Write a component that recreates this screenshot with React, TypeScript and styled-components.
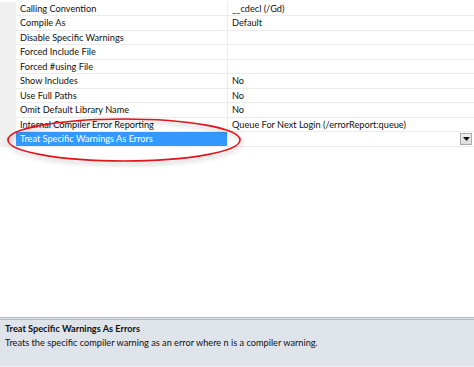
import React from "react";
import styled, { createGlobalStyle } from "styled-components";

const GlobalStyle = createGlobalStyle`
  html, body {
    margin: 0;
    padding: 0;
    background: #ffffff;
  }
  body {
    font-family: Lato, "Open Sans", sans-serif;
    font-size: 9.2px;
    color: #111111;
  }
`;

const rows = [
  { name: "Calling Convention", value: "__cdecl (/Gd)" },
  { name: "Compile As", value: "Default" },
  { name: "Disable Specific Warnings", value: "" },
  { name: "Forced Include File", value: "" },
  { name: "Forced #using File", value: "" },
  { name: "Show Includes", value: "No" },
  { name: "Use Full Paths", value: "No" },
  { name: "Omit Default Library Name", value: "No" },
  { name: "Internal Compiler Error Reporting", value: "Queue For Next Login (/errorReport:queue)" },
  { name: "Treat Specific Warnings As Errors", value: "", selected: true },
];

export default function App() {
  return (
    <>
      <GlobalStyle />
      <Window>
        <GridArea>
          <PropertyTable>
            <Gutter />
            <Grid>
              {rows.map((row) => (
                <Row key={row.name}>
                  <NameCell $selected={!!row.selected}>{row.name}</NameCell>
                  <ValueCell>
                    <span>{row.value}</span>
                    {row.selected && (
                      <DropButton>
                        <svg width="7" height="4" viewBox="0 0 7 4">
                          <path d="M0 0h7L3.5 4Z" fill="#111" />
                        </svg>
                      </DropButton>
                    )}
                  </ValueCell>
                </Row>
              ))}
            </Grid>
          </PropertyTable>
          <Highlight viewBox="0 0 250 50" width="250" height="50">
            <defs>
              <filter id="sh" x="-10%" y="-30%" width="120%" height="170%">
                <feDropShadow dx="1" dy="3" stdDeviation="2" floodColor="#000" floodOpacity="0.25" />
              </filter>
            </defs>
            <ellipse
              cx="124"
              cy="22"
              rx="116"
              ry="21"
              fill="none"
              stroke="#e0141b"
              strokeWidth="1.6"
              filter="url(#sh)"
            />
          </Highlight>
        </GridArea>
        <Description>
          <DescTitle>Treat Specific Warnings As Errors</DescTitle>
          <DescText>
            Treats the specific compiler warning as an error where n is a compiler warning.
          </DescText>
        </Description>
      </Window>
    </>
  );
}

const Window = styled.div`
  width: 474px;
  height: 367px;
  display: flex;
  flex-direction: column;
  overflow: hidden;
`;

const GridArea = styled.div`
  position: relative;
  flex: 1;
  padding-top: 1.5px;
`;

const PropertyTable = styled.div`
  display: flex;
`;

const Gutter = styled.div`
  width: 16px;
  background: #f0f0f0;
`;

const Grid = styled.div`
  flex: 1;
  display: flex;
  flex-direction: column;
`;

const Row = styled.div`
  display: grid;
  grid-template-columns: 212px 1fr;
  height: 14.5px;
  border-bottom: 1px solid #ececec;
  box-sizing: border-box;
`;

const NameCell = styled.div<{ $selected: boolean }>`
  display: flex;
  align-items: center;
  padding-left: 4px;
  border-right: 1px solid #ececec;
  white-space: nowrap;
  overflow: hidden;
  line-height: 13px;
  background: ${({ $selected }) => ($selected ? "#3399ff" : "transparent")};
  color: ${({ $selected }) => ($selected ? "#ffffff" : "#111111")};
`;

const ValueCell = styled.div`
  display: flex;
  align-items: center;
  justify-content: space-between;
  padding-left: 4px;
  padding-right: 2px;
  white-space: nowrap;
  line-height: 13px;
`;

const DropButton = styled.div`
  width: 12px;
  height: 12px;
  box-sizing: border-box;
  border: 1px solid #a9a9a9;
  background: linear-gradient(#f2f2f2, #dcdcdc);
  display: flex;
  align-items: center;
  justify-content: center;
`;

const Highlight = styled.svg`
  position: absolute;
  left: 0;
  top: 118px;
  pointer-events: none;
`;

const Description = styled.div`
  height: 50px;
  box-sizing: border-box;
  border-top: 3px double #b4b8bf;
  border-bottom: 1px solid #eef0f4;
  background: #dfe3ea;
  padding: 2px 5px 0;
  display: flex;
  flex-direction: column;
`;

const DescTitle = styled.div`
  font-weight: 700;
  line-height: 14px;
`;

const DescText = styled.div`
  line-height: 14px;
`;
